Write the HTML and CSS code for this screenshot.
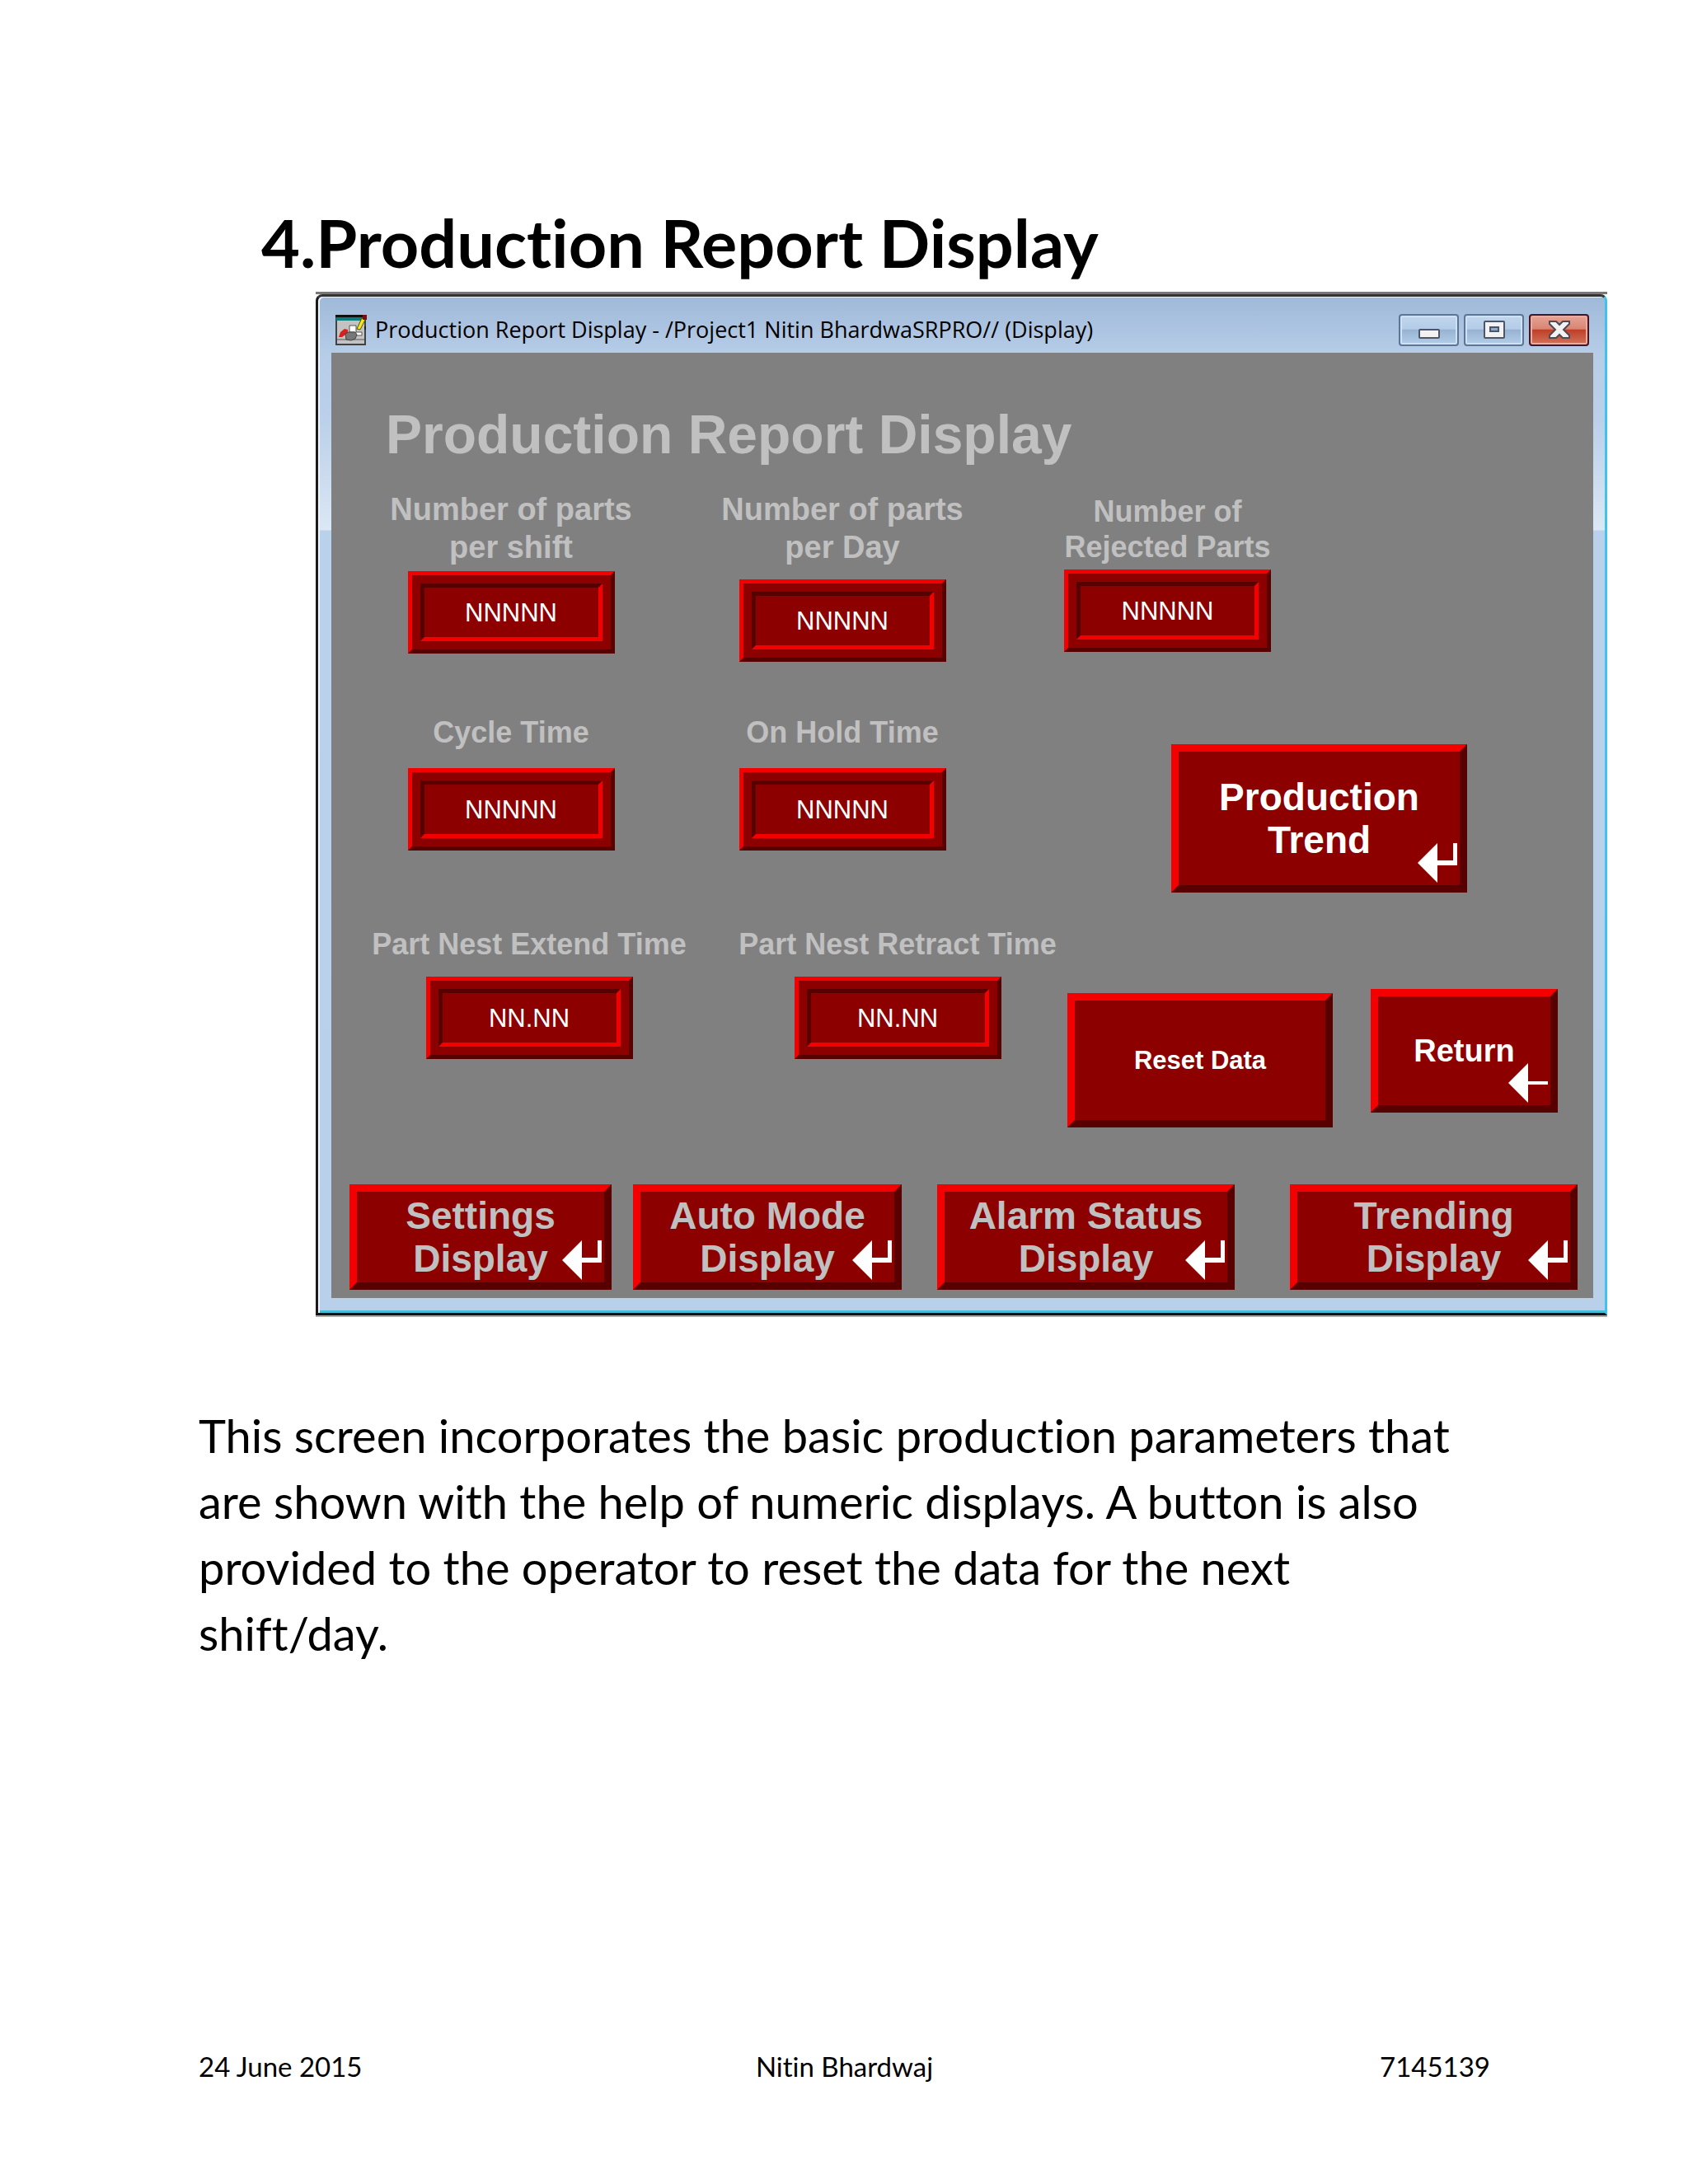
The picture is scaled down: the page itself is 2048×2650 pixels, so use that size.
FILE: index.html
```html
<!DOCTYPE html>
<html lang="en">
<head>
    <meta charset="UTF-8">
    <meta name="viewport" content="width=device-width, initial-scale=1.0">
    <title>Production Report Display</title>
    <link rel="stylesheet" href="styles.css">
</head>
<body>
    <main class="page">
        <h1>4.Production Report Display</h1>

        <section class="window">
            <div class="window-frame">
                <header class="title-bar">
                    <svg class="app-icon" viewBox="0 0 38 38" aria-hidden="true">
                        <rect x="1" y="3" width="35" height="34" fill="#c3c3c3" stroke="#3c4448" stroke-width="2"/>
                        <rect x="0" y="1" width="37" height="3" fill="#101010"/>
                        <rect x="1" y="4" width="35" height="4" fill="#0f7c7c"/>
                        <path d="M2 31H35" stroke="#8d8d8d" stroke-width="2"/>
                        <path d="M17 14h8v8h7v4h-9v-4h-6z" fill="#fff" stroke="#555" stroke-width="1"/>
                        <path d="M4 28l2-6 5-4 4 1v4l-7 5z" fill="#d8201c"/>
                        <path d="M12 24l4-2h8l2 3-2 5-5 2-6-1z" fill="#777" stroke="#444" stroke-width="1"/>
                        <path d="M26 18l6-13 4 2-6 12z" fill="#f4ea1c" stroke="#55500a" stroke-width="1"/>
                        <path d="M33 1h5v6h-5z" fill="#7e0a0a"/>
                        <path d="M36 15v4" stroke="#222" stroke-width="2"/>
                    </svg>
                    <span class="window-title">Production Report Display - /Project1 Nitin BhardwaSRPRO// (Display)</span>
                    <div class="window-controls">
                        <button class="control" aria-label="Minimize">
                            <svg viewBox="0 0 26 22"><rect x="1" y="11" width="24" height="10" rx="1" fill="#f2f2f2" stroke="#4d5668" stroke-width="2"/></svg>
                        </button>
                        <button class="control" aria-label="Maximize">
                            <svg viewBox="0 0 26 22"><rect x="1" y="1" width="24" height="20" rx="1" fill="#f2f2f2" stroke="#4d5668" stroke-width="2"/><rect x="8" y="8" width="10" height="5" fill="#8fa9c9" stroke="#4d5668" stroke-width="2"/></svg>
                        </button>
                        <button class="control close" aria-label="Close">
                            <svg viewBox="0 0 26 22"><path d="M1 1h8l4 4 4-4h8v3l-7 7 7 7v3h-8l-4-4-4 4H1v-3l7-7-7-7z" fill="#f2f2f2" stroke="#4f4a55" stroke-width="2"/></svg>
                        </button>
                    </div>
                </header>

                <div class="screen">
                    <h2>Production Report Display</h2>

                    <div class="panel">
                        <div class="readings">
                            <div class="row row-parts">
                                <div class="field large">
                                    <label for="partsShift">Number of parts<br>per shift</label>
                                    <output id="partsShift"><span>NNNNN</span></output>
                                </div>
                                <div class="field large spaced">
                                    <label for="partsDay">Number of parts<br>per Day</label>
                                    <output id="partsDay"><span>NNNNN</span></output>
                                </div>
                            </div>
                            <div class="row row-times">
                                <div class="field">
                                    <label for="cycleTime">Cycle Time</label>
                                    <output id="cycleTime"><span>NNNNN</span></output>
                                </div>
                                <div class="field">
                                    <label for="holdTime">On Hold Time</label>
                                    <output id="holdTime"><span>NNNNN</span></output>
                                </div>
                            </div>
                            <div class="row row-nest">
                                <div class="field">
                                    <label for="extendTime">Part Nest Extend Time</label>
                                    <output id="extendTime"><span>NN.NN</span></output>
                                </div>
                                <div class="field">
                                    <label for="retractTime">Part Nest Retract Time</label>
                                    <output id="retractTime"><span>NN.NN</span></output>
                                </div>
                            </div>
                        </div>

                        <div class="actions">
                            <div class="field rejected">
                                <label for="rejected">Number of<br>Rejected Parts</label>
                                <output id="rejected"><span>NNNNN</span></output>
                            </div>
                            <button class="key trend">Production<br>Trend
                                <svg class="arrow" viewBox="0 0 48 48"><path d="M0 24L24 0V21H43V0H48V27H24V48z"/></svg>
                            </button>
                            <div class="action-row">
                                <button class="key reset">Reset Data</button>
                                <button class="key return">Return
                                    <svg class="arrow" viewBox="0 0 48 48"><path d="M0 24L24 0V22H48V26H24V48z"/></svg>
                                </button>
                            </div>
                        </div>
                    </div>

                    <nav class="screen-nav">
                        <button class="key settings">Settings<br>Display
                            <svg class="arrow" viewBox="0 0 48 48"><path d="M0 24L24 0V21H43V0H48V27H24V48z"/></svg>
                        </button>
                        <button class="key auto">Auto Mode<br>Display
                            <svg class="arrow" viewBox="0 0 48 48"><path d="M0 24L24 0V21H43V0H48V27H24V48z"/></svg>
                        </button>
                        <button class="key alarm">Alarm Status<br>Display
                            <svg class="arrow" viewBox="0 0 48 48"><path d="M0 24L24 0V21H43V0H48V27H24V48z"/></svg>
                        </button>
                        <button class="key trending">Trending<br>Display
                            <svg class="arrow" viewBox="0 0 48 48"><path d="M0 24L24 0V21H43V0H48V27H24V48z"/></svg>
                        </button>
                    </nav>
                </div>
            </div>
        </section>

        <p class="description">This screen incorporates the basic production parameters that are shown with the help of numeric displays. A button is also provided to the operator to reset the data for the next shift/day.</p>

        <footer class="page-footer">
            <span>24 June 2015</span>
            <span>Nitin Bhardwaj</span>
            <span>7145139</span>
        </footer>
    </main>
</body>
</html>
```
FILE: styles.css
```css
* {
    margin: 0;
    padding: 0;
    box-sizing: border-box;
}

body {
    background-color: white;
    color: black;
    font-family: Lato, "Liberation Sans", sans-serif;
    font-variant-ligatures: none;
}

.page {
    display: flex;
    flex-direction: column;
    min-height: 100vh;
    padding: 238px 240px 119px 241px;
}

h1 {
    margin-bottom: 5px;
    padding-left: 76px;
    font-size: 81px;
    line-height: 111px;
    font-weight: bold;
}

/* Display window */
.window {
    margin: 0 -142px 0 142px;
    border-top: 3px solid #777;
    border-bottom: 2px solid #a9aaa4;
}

.window-frame {
    border-top: 3px solid #333;
    border-left: 3px solid #1a1a1a;
    border-right: 3px solid #3cc4ec;
    border-bottom: 3px solid #0b1012;
    border-radius: 8px 8px 0 0;
    padding: 0 14px 18px 16px;
    background: linear-gradient(#9fb9d8 0, #b6cde8 70px, #bbd0ea 150px, #dbe7f4 283px, #b9d1ea 284px, #b9d0ea 100%);
    box-shadow: inset 2px 1px #eef4fa, inset 0 -3px #45bcd8;
}

.title-bar {
    display: flex;
    align-items: center;
    height: 68px;
    padding: 12px 5px 0;
}

.app-icon {
    width: 38px;
    height: 38px;
    margin-right: 10px;
}

.window-title {
    font-family: "Open Sans", "Noto Sans", sans-serif;
    font-size: 27px;
    line-height: 38px;
    white-space: nowrap;
}

.window-controls {
    display: flex;
    gap: 6px;
    margin-left: auto;
}

.control {
    display: flex;
    align-items: center;
    justify-content: center;
    width: 73px;
    height: 39px;
    border: 2px solid #5d7696;
    border-radius: 4px;
    background: linear-gradient(#c2d7ee 0, #b4cce8 46%, #98b3d2 50%, #b3cee9 100%);
    box-shadow: inset 0 0 0 2px #cfe2f5;
}

.control svg {
    width: 26px;
    height: 22px;
}

.control.close {
    border-color: #4a1420;
    background: linear-gradient(#e5a496 0, #d98572 46%, #bf3f28 50%, #d3735a 100%);
    box-shadow: inset 0 0 0 2px #eda99a;
}

/* Operator screen */
.screen {
    padding: 61px 19px 10px 22px;
    background-color: #818080;
    color: #c0c0c0;
    font-family: "Liberation Sans", Arial, sans-serif;
    font-weight: bold;
}

h2 {
    padding-left: 44px;
    font-size: 66px;
    line-height: 76px;
}

.panel {
    display: flex;
    gap: 12px;
    margin-top: 30px;
}

.readings {
    flex: none;
}

.row {
    display: flex;
}

.row .field {
    width: 300px;
}

.row-parts,
.row-times {
    gap: 102px;
    padding-left: 46px;
}

.row-times {
    margin-top: 64px;
}

.row-nest {
    gap: 67px;
    margin-top: 92px;
    padding-left: 28px;
}

.row-nest .field {
    width: 380px;
}

.field {
    display: flex;
    flex-direction: column;
    align-items: center;
    gap: 6px;
    font-size: 36px;
    line-height: 43px;
    text-align: center;
    white-space: nowrap;
}

.field.large {
    font-size: 38px;
    line-height: 46px;
}

.field.spaced {
    gap: 16px;
}

.row-times .field {
    gap: 22px;
}

.row-nest .field {
    gap: 18px;
}

output {
    display: flex;
    width: 251px;
    height: 100px;
    padding: 10px;
    border: 5px solid;
    border-color: #f50000 #580000 #580000 #f50000;
    background-color: #8c0000;
}

output span {
    flex: 1;
    padding-top: 2px;
    border: 5px solid;
    border-color: #580000 #f50000 #f50000 #580000;
    color: white;
    font-size: 31px;
    line-height: 58px;
    font-weight: normal;
}

.actions {
    display: flex;
    flex-direction: column;
    align-items: flex-start;
    padding-top: 4px;
}

.rejected {
    width: 251px;
}

.action-row {
    display: flex;
    align-items: flex-start;
    gap: 46px;
    margin: 117px 0 0 4px;
}

.key {
    position: relative;
    border: 9px solid;
    border-color: #f50000 #580000 #580000 #f50000;
    background-color: #8c0000;
    color: white;
    font-family: inherit;
    font-size: 46px;
    line-height: 52px;
    font-weight: bold;
    cursor: pointer;
}

.arrow {
    position: absolute;
    right: 3px;
    bottom: 3px;
    width: 48px;
    height: 48px;
    fill: white;
}

.trend {
    width: 359px;
    height: 180px;
    margin: 112px 0 0 130px;
}

.reset {
    width: 322px;
    height: 163px;
    margin-top: 5px;
    font-size: 31px;
}

.return {
    width: 227px;
    height: 150px;
    font-size: 38px;
}

.screen-nav {
    display: flex;
    margin-top: 69px;
}

.screen-nav .key {
    height: 128px;
    color: #c0c0c0;
}

.settings {
    flex: 300;
}

.auto {
    flex: 308;
    margin-left: 26px;
}

.alarm {
    flex: 343;
    margin-left: 43px;
}

.trending {
    flex: 331;
    margin-left: 67px;
}

/* Text under the window */
.description {
    margin-top: 104px;
    font-size: 56px;
    line-height: 80px;
}

.page-footer {
    display: flex;
    margin-top: auto;
    font-size: 33px;
    line-height: 48px;
}

.page-footer span {
    flex: 1;
    text-align: center;
}

.page-footer span:first-child {
    text-align: left;
}

.page-footer span:last-child {
    text-align: right;
}
```
